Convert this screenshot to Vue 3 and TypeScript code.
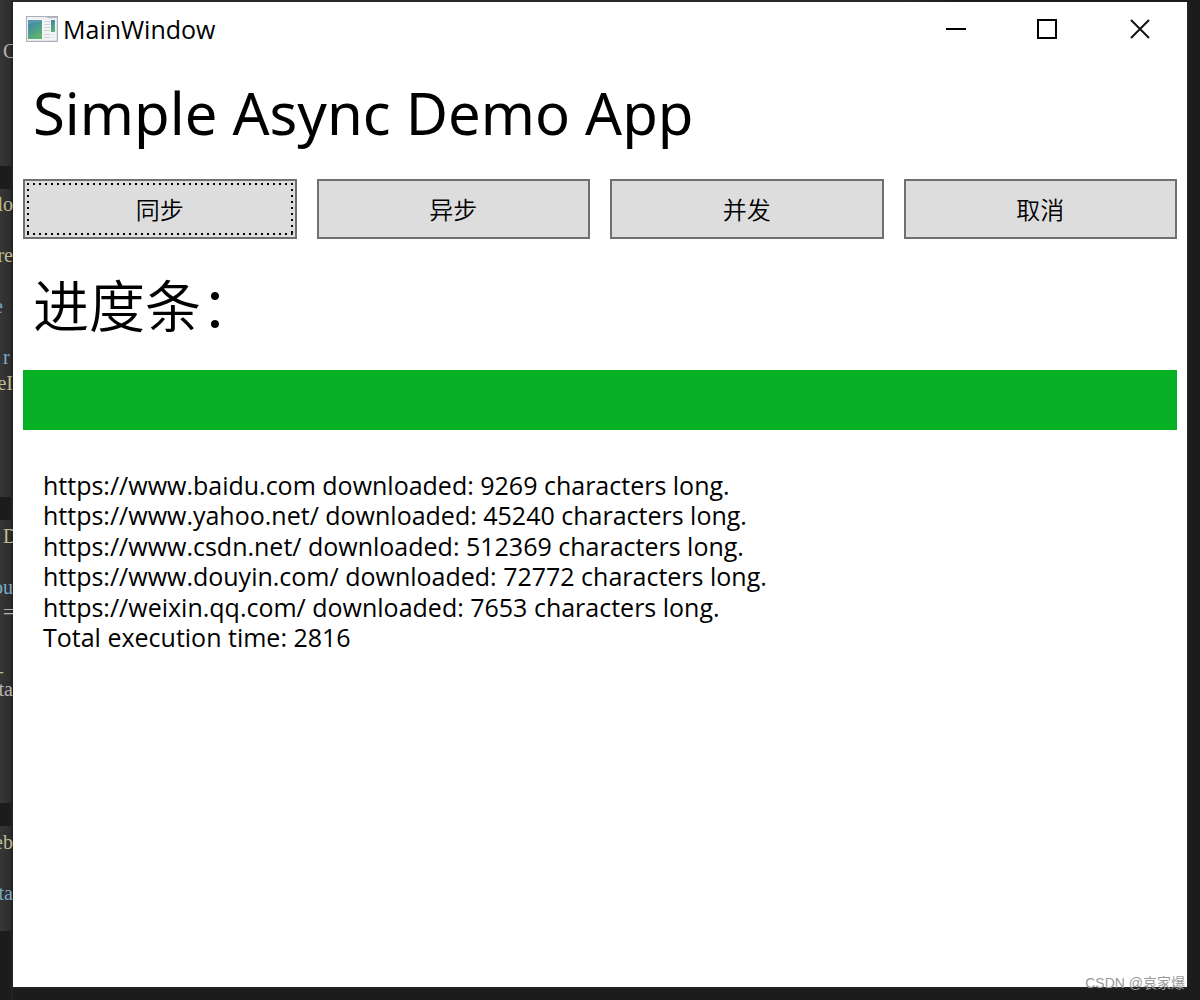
<script setup lang="ts">
import { ref } from 'vue'

interface CodeLine {
  row: number
  text: string
  tone: string
  indent?: boolean
}

const codeLines: CodeLine[] = [
  { row: 2, text: 'C', tone: 'plain', indent: true },
  { row: 7, text: '', tone: 'band' },
  { row: 8, text: 'lo', tone: 'method' },
  { row: 10, text: 're', tone: 'method' },
  { row: 12, text: 'e  ', tone: 'field' },
  { row: 14, text: 'r', tone: 'field', indent: true },
  { row: 15, text: 'eI', tone: 'method' },
  { row: 20, text: '', tone: 'band' },
  { row: 21, text: 'D', tone: 'method', indent: true },
  { row: 23, text: 'ou', tone: 'field' },
  { row: 24, text: '=', tone: 'plain', indent: true },
  { row: 26, text: '_  ', tone: 'method' },
  { row: 27, text: 'ta', tone: 'plain' },
  { row: 32, text: '', tone: 'band' },
  { row: 33, text: 'eb', tone: 'method' },
  { row: 35, text: 'ta', tone: 'field' },
]

const actions: string[] = ['同步', '异步', '并发', '取消']
const focused = ref<number>(0)

const log: string[] = [
  'https://www.baidu.com downloaded: 9269 characters long.',
  'https://www.yahoo.net/ downloaded: 45240 characters long.',
  'https://www.csdn.net/ downloaded: 512369 characters long.',
  'https://www.douyin.com/ downloaded: 72772 characters long.',
  'https://weixin.qq.com/ downloaded: 7653 characters long.',
  'Total execution time: 2816',
]
</script>

<template>
  <div class="desktop">
    <div class="editor">
      <div
        v-for="line in codeLines"
        :key="line.row"
        class="code"
        :class="[line.tone, { indent: line.indent }]"
        :style="{ gridRow: line.row }"
      >{{ line.text }}</div>
      <div class="editor-end"></div>
    </div>

    <main class="window">
      <header class="titlebar">
        <svg class="app-icon" width="32" height="26" viewBox="0 0 32 26" aria-hidden="true">
          <defs>
            <linearGradient id="pane" x1="0" y1="0" x2="0.6" y2="1">
              <stop offset="0" stop-color="#3f7fae" />
              <stop offset="0.5" stop-color="#479b94" />
              <stop offset="1" stop-color="#62b46c" />
            </linearGradient>
            <linearGradient id="frame" x1="0" y1="0" x2="1" y2="1">
              <stop offset="0" stop-color="#f4f5f7" />
              <stop offset="1" stop-color="#dcdfe3" />
            </linearGradient>
          </defs>
          <rect x="0.5" y="0.5" width="31" height="25" fill="url(#frame)" stroke="#a9afb8" />
          <path d="M21 1.500H31" stroke="#b3b8c0" />
          <rect x="2" y="3" width="28" height="21" fill="#f3f4f6" />
          <rect x="2" y="4" width="14" height="19" fill="url(#pane)" />
          <path d="M2 9Q9 4 16 6V4H2Z" fill="#75a6c4" opacity="0.5" />
          <path d="M18 5.500H24M18 8.500H24M18 11.500H24M18 14.500H24M18 18.500H24M18 21.500H24" stroke="#cfd1d4" />
          <rect x="25" y="4" width="4" height="12" fill="url(#pane)" />
          <path d="M25 18.500H29M25 21.500H29" stroke="#e3e4e6" />
        </svg>
        <span class="caption">MainWindow</span>
        <div class="controls">
          <button type="button" aria-label="Minimize">
            <svg width="22" height="22" viewBox="0 0 22 22"><path d="M1 11H21" stroke="#000" stroke-width="2" /></svg>
          </button>
          <button type="button" aria-label="Maximize">
            <svg width="22" height="22" viewBox="0 0 22 22"><rect x="1" y="2" width="18" height="18" fill="none" stroke="#000" stroke-width="2" /></svg>
          </button>
          <button type="button" aria-label="Close">
            <svg width="22" height="22" viewBox="0 0 22 22"><path d="M2 2L20 20M20 2L2 20" stroke="#111" stroke-width="2" /></svg>
          </button>
        </div>
      </header>

      <h1 class="title">Simple Async Demo App</h1>

      <div class="actions">
        <button
          v-for="(label, i) in actions"
          :key="label"
          type="button"
          class="action"
          :class="{ focused: focused === i }"
          @click="focused = i"
        >{{ label }}</button>
      </div>

      <h2 class="progress-label">进度条：</h2>
      <div class="progress" role="progressbar" aria-label="进度条" aria-valuenow="100" aria-valuemin="0" aria-valuemax="100"></div>

      <ul class="log">
        <li v-for="entry in log" :key="entry">{{ entry }}</li>
      </ul>
    </main>

    <span class="watermark">CSDN @哀家爆</span>
  </div>
</template>

<style>
body {
  margin: 0;
  background: #1c1c1c;
}
</style>

<style scoped>
.desktop {
  position: relative;
  box-sizing: border-box;
  min-height: 100vh;
  display: grid;
  grid-template-columns: 13px 1fr;
  padding-right: 13px;
  overflow: hidden;
  background: linear-gradient(90deg, #2a2a2a 75%, #1c1c1c 80%) top / 100% 2px no-repeat #1c1c1c;
  font-family: "Open Sans", "Noto Sans CJK SC", sans-serif;
  color: #000;
}

.editor {
  display: grid;
  grid-template-columns: minmax(0, 1fr);
  grid-auto-rows: 25px 26px;
  align-content: start;
  padding-top: 13px;
  height: 100vh;
  box-sizing: border-box;
  overflow: hidden;
  background: linear-gradient(90deg, #363636, #2c2c2c 11px, #232323 11px);
  font-family: "Liberation Serif", serif;
  font-size: 20px;
  line-height: 24px;
}

.code {
  display: flex;
  justify-content: flex-end;
  align-items: center;
  white-space: pre;
}

.indent {
  justify-content: flex-start;
  padding-left: 3px;
}

.plain { color: #b4b4b4; }
.method { color: #bcbc94; }
.field { color: #7ba9c9; }

.band {
  height: 23px;
  margin-right: 2px;
  background: #1c1c1c;
}

.editor-end {
  grid-row: 37 / 40;
  margin-right: 2px;
  background: #1c1c1c;
}

.window {
  margin: 2px 0 13px;
  background: #fff;
  box-shadow: 2px 0 0 #222, 0 2px 0 #222;
}

.titlebar {
  display: flex;
  align-items: center;
  height: 54px;
  padding-left: 13px;
}

.caption {
  margin-left: 5px;
  font-size: 25px;
  line-height: 32px;
}

.controls {
  display: flex;
  margin-left: auto;
  margin-right: 1px;
}

.controls button {
  display: flex;
  align-items: center;
  justify-content: center;
  width: 92px;
  height: 54px;
  padding: 0;
  border: 0;
  background: none;
}

.title,
.progress-label {
  margin: 0;
  padding: 0 20px;
  font-weight: 400;
  line-height: 76px;
  white-space: nowrap;
}

.title {
  font-family: "Noto Sans", sans-serif;
  font-size: 58px;
  padding-top: 19px;
  padding-bottom: 28px;
}

.actions {
  display: grid;
  grid-template-columns: repeat(4, 1fr);
  gap: 20px;
  padding: 0 10px;
}

.action {
  position: relative;
  height: 60px;
  padding: 0 0 2px;
  border: 2px solid #707070;
  border-radius: 0;
  background: #ddd;
  color: #000;
  font: 24px "Noto Sans CJK SC", sans-serif;
  font-weight: 350;
  outline: none;
}

.focused::after {
  content: "";
  position: absolute;
  inset: 2px;
  background:
    repeating-linear-gradient(90deg, #000 0 2px, transparent 2px 6px) top / 100% 2px no-repeat,
    repeating-linear-gradient(90deg, #000 0 2px, transparent 2px 6px) bottom / 100% 2px no-repeat,
    repeating-linear-gradient(#000 0 2px, transparent 2px 6px) left / 2px 100% no-repeat,
    repeating-linear-gradient(#000 0 2px, transparent 2px 6px) right / 2px 100% no-repeat;
}

.progress-label {
  font-size: 56px;
  font-weight: 350;
  padding-top: 28px;
  padding-bottom: 27px;
}

.progress {
  height: 60px;
  margin: 0 10px;
  background: #06b025;
}

.log {
  display: grid;
  grid-auto-rows: 30px 31px;
  margin: 0;
  padding: 40px 30px;
  list-style: none;
  font-size: 25px;
  line-height: 30px;
}

.watermark {
  position: absolute;
  right: 15px;
  bottom: 7px;
  color: #999;
  font: 14px/20px "Liberation Sans", "Noto Sans CJK SC", sans-serif;
}
</style>
